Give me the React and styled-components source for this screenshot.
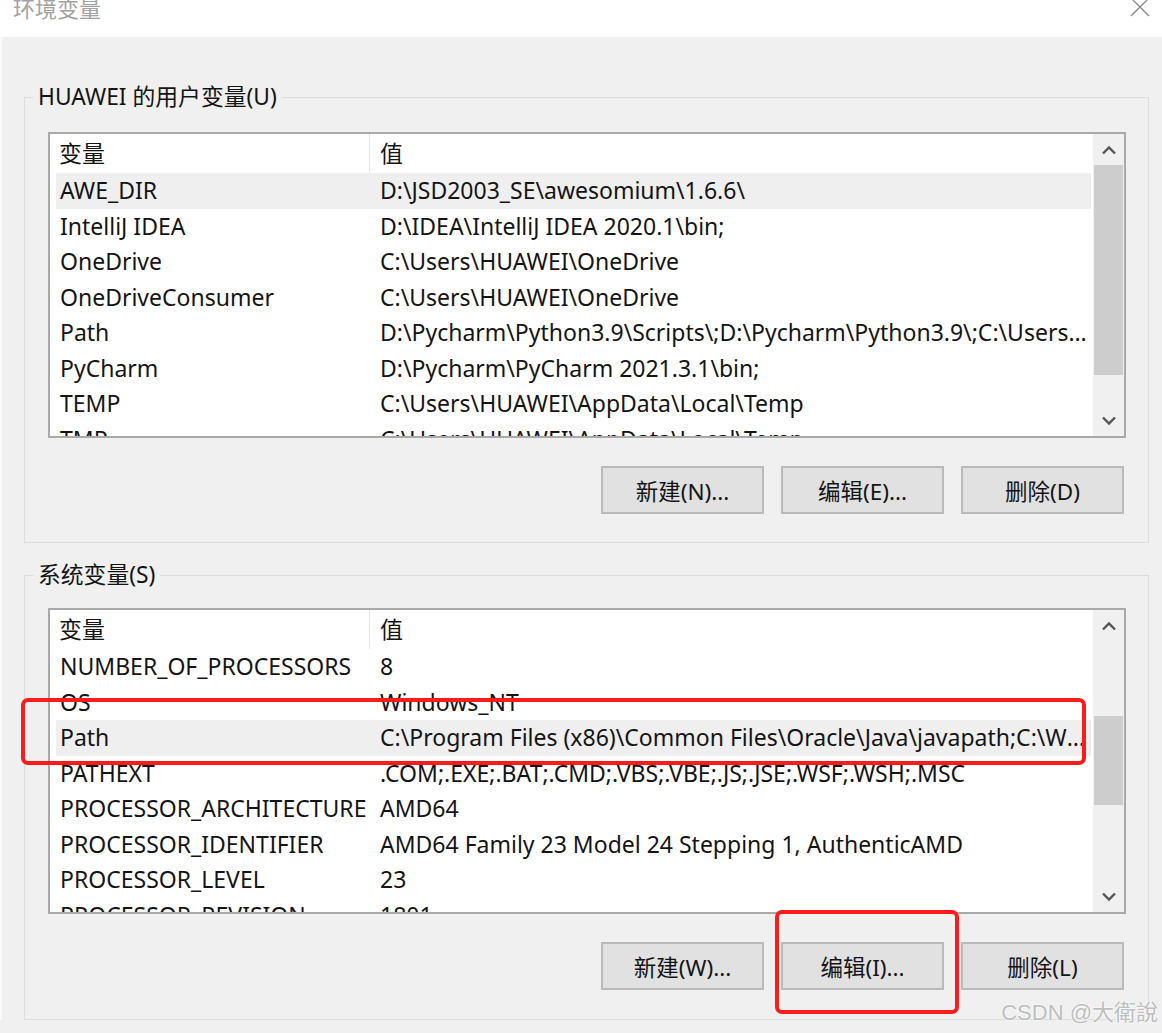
import React from 'react';
import styled, { createGlobalStyle } from 'styled-components';

const GlobalStyle = createGlobalStyle`
  html, body {
    margin: 0;
    padding: 0;
    background: #f0f0f0;
  }
  body {
    font-family: "Noto Sans", "Noto Sans CJK SC", sans-serif;
    color: #141414;
  }
  * {
    box-sizing: border-box;
  }
`;

const Window = styled.div`
  position: relative;
  width: 1162px;
  height: 1033px;
  overflow: hidden;
  background: #f0f0f0;
`;

const TitleBar = styled.div`
  height: 37px;
  background: #fff;
  display: flex;
  justify-content: space-between;
  align-items: flex-start;
  padding-left: 13px;
  overflow: hidden;
`;

const Title = styled.div`
  font-size: 22px;
  line-height: 22px;
  margin-top: -3px;
  color: #a3a3a3;
`;

const CloseIcon = styled.svg`
  width: 22px;
  height: 22px;
  margin: -4px 11px 0 0;
`;

const Body = styled.div`
  padding: 60px 13px 0 24px;
  border-left: 2px solid #fafafa;
`;

const GroupBox = styled.div`
  border: 1px solid #dcdcdc;
  padding: 0 22px ${p => p.$bottom}px 23px;
  margin-top: ${p => p.$top}px;
  margin-left: -2px;
`;

const Legend = styled.div`
  display: table;
  margin: -14px 0 0 -15px;
  padding: 0 5px;
  background: #f0f0f0;
  font-size: 22.8px;
  line-height: 26px;
`;

const ListBox = styled.div`
  margin-top: ${p => p.$gap}px;
  height: 306px;
  border: 2px solid #a9a9a9;
  background: #fff;
  display: flex;
`;

const ListMain = styled.div`
  flex: 1;
  overflow: hidden;
`;

const HeaderRow = styled.div`
  height: 39px;
  display: grid;
  grid-template-columns: 320px 1fr;
  align-items: center;
  font-size: 23px;
`;

const HeaderCell = styled.div`
  height: 39px;
  line-height: 39px;
  padding-left: ${p => (p.$first ? 9 : 10)}px;
  border-right: ${p => (p.$first ? '1px solid #e5e5e5' : 'none')};
`;

const Row = styled.div`
  height: 35.5px;
  line-height: 35.5px;
  margin: 0 2px 0 6px;
  display: grid;
  grid-template-columns: 314px 1fr;
  font-size: 23px;
  background: ${p => (p.$active ? '#efefef' : 'transparent')};
`;

const NameCell = styled.div`
  padding-left: 4px;
  white-space: nowrap;
  overflow: hidden;
`;

const ValueCell = styled.div`
  padding: 0 4px 0 10px;
  white-space: nowrap;
  overflow: hidden;
  text-overflow: ellipsis;
`;

const ScrollBar = styled.div`
  width: 31px;
  background: #f0f0f0;
  display: flex;
  flex-direction: column;
`;

const ScrollButton = styled.div`
  height: 31px;
  display: flex;
  align-items: center;
  justify-content: center;
`;

const ScrollTrack = styled.div`
  flex: 1;
  padding-top: ${p => p.$offset}px;
`;

const Thumb = styled.div`
  height: ${p => p.$size}px;
  margin: 0 1px;
  background: #cdcdcd;
`;

const ButtonRow = styled.div`
  margin-top: 28px;
  display: flex;
  justify-content: flex-end;
  gap: 17px;
  padding-right: 2px;
`;

const Button = styled.button`
  width: 163px;
  height: 48px;
  background: #e1e1e1;
  border: 2px solid #bababa;
  font-family: "Noto Sans", "Noto Sans CJK SC", sans-serif;
  font-size: 22.5px;
  color: #141414;
  padding: 0;
  cursor: default;
`;

const RedBox = styled.div`
  position: absolute;
  left: ${p => p.$x}px;
  top: ${p => p.$y}px;
  width: ${p => p.$w}px;
  height: ${p => p.$h}px;
  border: 4px solid #fb1c1c;
  border-radius: 7px;
  pointer-events: none;
`;

const Watermark = styled.div`
  position: absolute;
  right: 4px;
  bottom: 7px;
  font-family: "Liberation Sans", "Noto Sans CJK TC", sans-serif;
  font-size: 22px;
  color: #bdbdbd;
  text-shadow: 0 0 2px #fff, 0 0 2px #fff;
`;

const Chevron = ({ up }) => (
  <svg width="16" height="10" viewBox="0 0 16 10">
    <path
      d={up ? 'M2 8.5 L8 2.5 L14 8.5' : 'M2 1.5 L8 7.5 L14 1.5'}
      fill="none"
      stroke="#555"
      strokeWidth="2.4"
    />
  </svg>
);

const userVars = [
  ['AWE_DIR', 'D:\\JSD2003_SE\\awesomium\\1.6.6\\'],
  ['IntelliJ IDEA', 'D:\\IDEA\\IntelliJ IDEA 2020.1\\bin;'],
  ['OneDrive', 'C:\\Users\\HUAWEI\\OneDrive'],
  ['OneDriveConsumer', 'C:\\Users\\HUAWEI\\OneDrive'],
  ['Path', 'D:\\Pycharm\\Python3.9\\Scripts\\;D:\\Pycharm\\Python3.9\\;C:\\Users\\HUAWEI\\AppData\\Local\\Microsoft\\WindowsApps'],
  ['PyCharm', 'D:\\Pycharm\\PyCharm 2021.3.1\\bin;'],
  ['TEMP', 'C:\\Users\\HUAWEI\\AppData\\Local\\Temp'],
  ['TMP', 'C:\\Users\\HUAWEI\\AppData\\Local\\Temp']
];

const sysVars = [
  ['NUMBER_OF_PROCESSORS', '8'],
  ['OS', 'Windows_NT'],
  ['Path', 'C:\\Program Files (x86)\\Common Files\\Oracle\\Java\\javapath;C:\\Windows\\system32;C:\\Windows'],
  ['PATHEXT', '.COM;.EXE;.BAT;.CMD;.VBS;.VBE;.JS;.JSE;.WSF;.WSH;.MSC'],
  ['PROCESSOR_ARCHITECTURE', 'AMD64'],
  ['PROCESSOR_IDENTIFIER', 'AMD64 Family 23 Model 24 Stepping 1, AuthenticAMD'],
  ['PROCESSOR_LEVEL', '23'],
  ['PROCESSOR_REVISION', '1801']
];

const VarList = ({ rows, active, gap, thumbOffset, thumbSize }) => (
  <ListBox $gap={gap}>
    <ListMain>
      <HeaderRow>
        <HeaderCell $first>变量</HeaderCell>
        <HeaderCell>值</HeaderCell>
      </HeaderRow>
      {rows.map(([name, value]) => (
        <Row key={name} $active={name === active}>
          <NameCell>{name}</NameCell>
          <ValueCell>{value}</ValueCell>
        </Row>
      ))}
    </ListMain>
    <ScrollBar>
      <ScrollButton>
        <Chevron up />
      </ScrollButton>
      <ScrollTrack $offset={thumbOffset}>
        <Thumb $size={thumbSize} />
      </ScrollTrack>
      <ScrollButton>
        <Chevron />
      </ScrollButton>
    </ScrollBar>
  </ListBox>
);

const App = () => (
  <Window>
    <GlobalStyle />
    <TitleBar>
      <Title>环境变量</Title>
      <CloseIcon viewBox="0 0 22 22">
        <path d="M2 2 L20 20 M20 2 L2 20" stroke="#8a8a8a" strokeWidth="1.4" fill="none" />
      </CloseIcon>
    </TitleBar>
    <Body>
      <GroupBox $top={0} $bottom={28}>
        <Legend>HUAWEI 的用户变量(U)</Legend>
        <VarList rows={userVars} active="AWE_DIR" gap={22} thumbOffset={0} thumbSize={210} />
        <ButtonRow>
          <Button>新建(N)...</Button>
          <Button>编辑(E)...</Button>
          <Button>删除(D)</Button>
        </ButtonRow>
      </GroupBox>
      <GroupBox $top={32} $bottom={29}>
        <Legend>系统变量(S)</Legend>
        <VarList rows={sysVars} active="Path" gap={20} thumbOffset={75} thumbSize={89} />
        <ButtonRow>
          <Button>新建(W)...</Button>
          <Button>编辑(I)...</Button>
          <Button>删除(L)</Button>
        </ButtonRow>
      </GroupBox>
    </Body>
    <RedBox $x={21} $y={698} $w={1065} $h={67} />
    <RedBox $x={775} $y={910} $w={184} $h={104} />
    <Watermark>CSDN @大衛說</Watermark>
  </Window>
);

export default App;
